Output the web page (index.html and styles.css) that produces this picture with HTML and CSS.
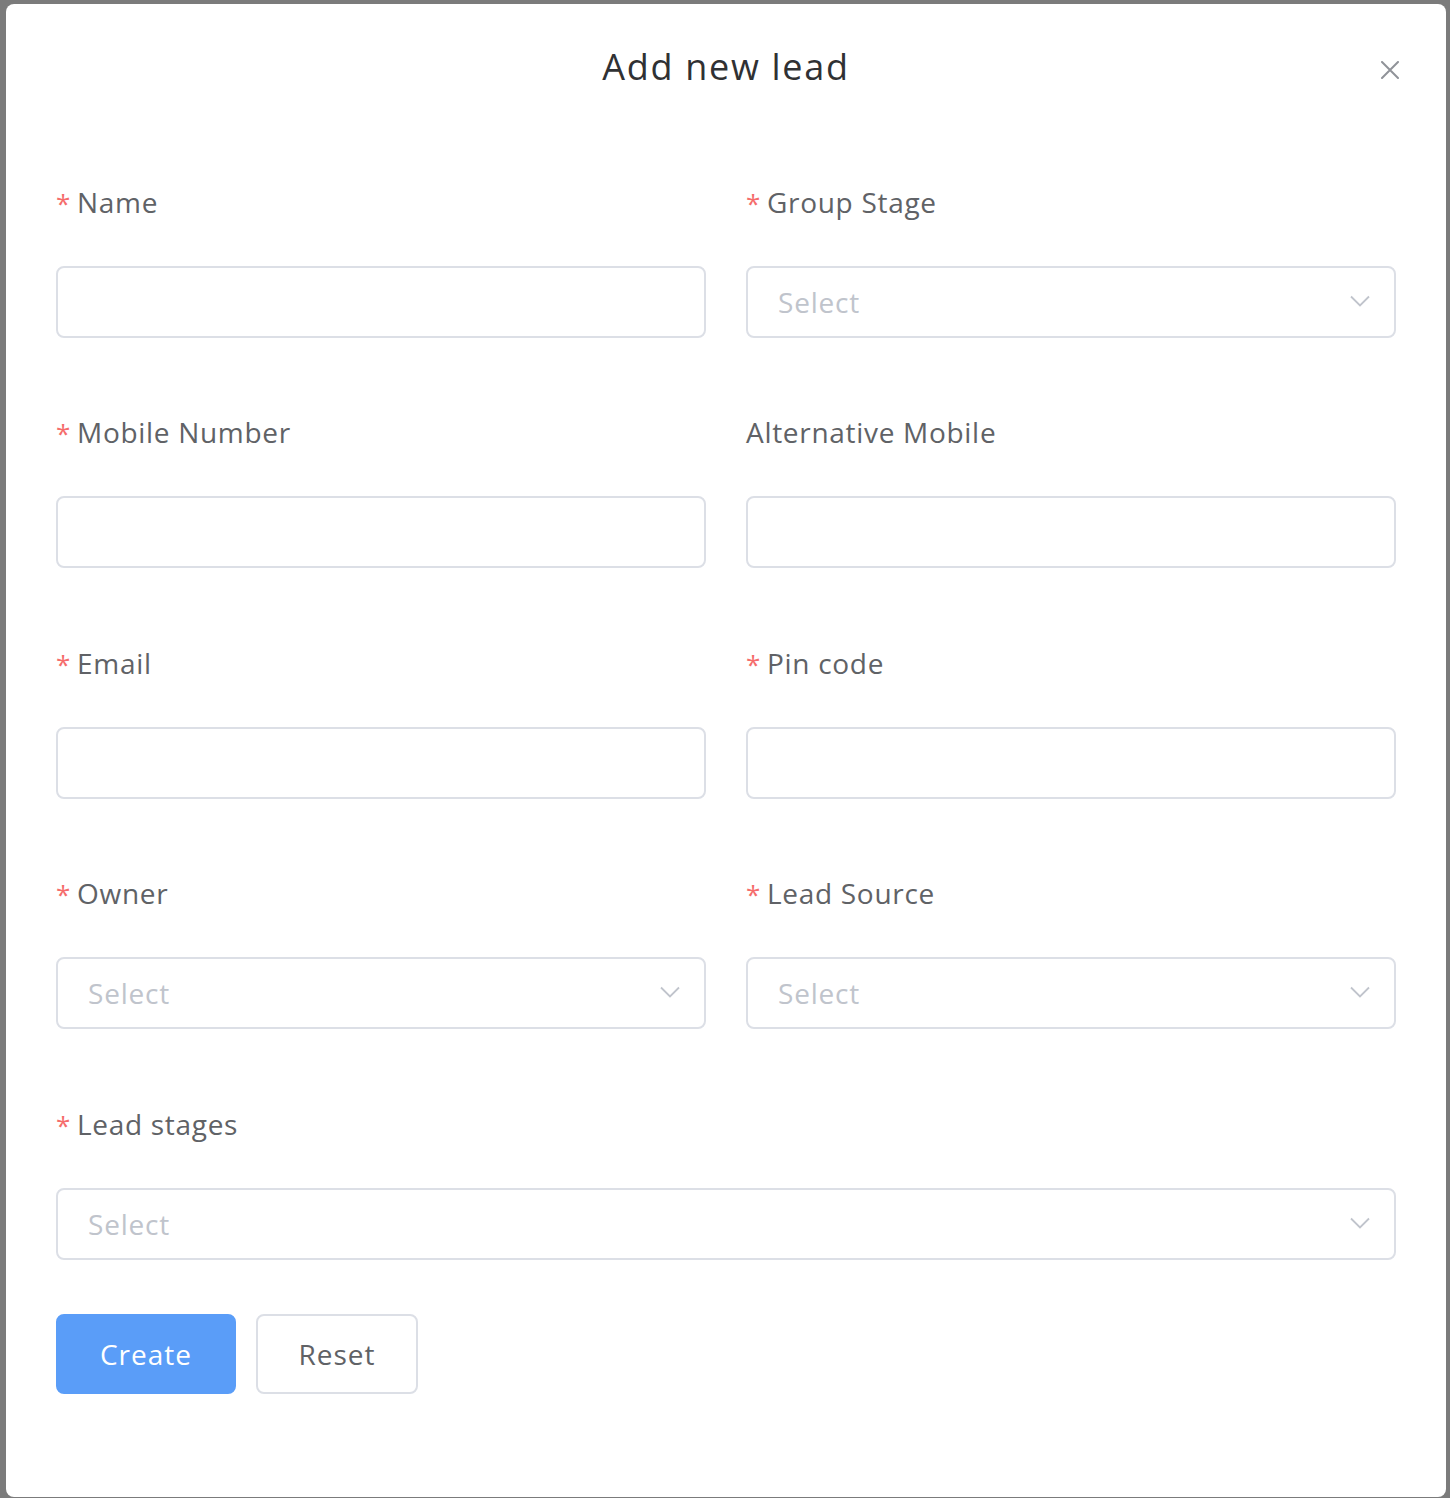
FILE: index.html
```html
<!DOCTYPE html>
<html lang="en">
<head>
<meta charset="utf-8">
<title>Add new lead</title>
<link rel="stylesheet" href="styles.css">
</head>
<body>
<div class="overlay">
  <div class="dialog" role="dialog" aria-label="Add new lead">
    <header class="dialog-header">
      <h2 class="dialog-title">Add new lead</h2>
      <button class="dialog-close" type="button" aria-label="Close">
        <svg viewBox="0 0 18 18" width="18" height="18"><path d="M1 1 L17 17 M17 1 L1 17" stroke="#909399" stroke-width="2" stroke-linecap="round" fill="none"/></svg>
      </button>
    </header>
    <form class="form">
      <div class="grid">
        <div class="item">
          <label class="label required">Name</label>
          <div class="control"><input class="input" type="text"></div>
        </div>
        <div class="item">
          <label class="label required">Group Stage</label>
          <div class="control select"><span class="placeholder">Select</span><svg class="chev" viewBox="0 0 20 12" width="20" height="12"><path d="M1 1.5 L10 10.5 L19 1.5" stroke="#c0c4cc" stroke-width="1.8" fill="none"/></svg></div>
        </div>
        <div class="item">
          <label class="label required">Mobile Number</label>
          <div class="control"><input class="input" type="text"></div>
        </div>
        <div class="item">
          <label class="label">Alternative Mobile</label>
          <div class="control"><input class="input" type="text"></div>
        </div>
        <div class="item">
          <label class="label required">Email</label>
          <div class="control"><input class="input" type="text"></div>
        </div>
        <div class="item">
          <label class="label required">Pin code</label>
          <div class="control"><input class="input" type="text"></div>
        </div>
        <div class="item">
          <label class="label required">Owner</label>
          <div class="control select"><span class="placeholder">Select</span><svg class="chev" viewBox="0 0 20 12" width="20" height="12"><path d="M1 1.5 L10 10.5 L19 1.5" stroke="#c0c4cc" stroke-width="1.8" fill="none"/></svg></div>
        </div>
        <div class="item">
          <label class="label required">Lead Source</label>
          <div class="control select"><span class="placeholder">Select</span><svg class="chev" viewBox="0 0 20 12" width="20" height="12"><path d="M1 1.5 L10 10.5 L19 1.5" stroke="#c0c4cc" stroke-width="1.8" fill="none"/></svg></div>
        </div>
      </div>
      <div class="item">
        <label class="label required">Lead stages</label>
        <div class="control select"><span class="placeholder">Select</span><svg class="chev" viewBox="0 0 20 12" width="20" height="12"><path d="M1 1.5 L10 10.5 L19 1.5" stroke="#c0c4cc" stroke-width="1.8" fill="none"/></svg></div>
      </div>
      <div class="actions">
        <button class="btn btn-primary" type="button">Create</button>
        <button class="btn btn-default" type="button">Reset</button>
      </div>
    </form>
  </div>
</div>
</body>
</html>
```
FILE: styles.css
```css
* { box-sizing: border-box; }
html, body { margin: 0; padding: 0; }
body {
  background: #7b7b7b;
  font-family: "Open Sans", "Noto Sans", sans-serif;
  overflow: hidden;
}
.overlay {
  height: 1498px;
  padding: 4px 4px 0 6px;
}
.dialog {
  position: relative;
  background: #ffffff;
  border-radius: 8px;
  height: 1493px;
  padding: 39px 50px 0 50px;
}
.dialog-header {
  height: 118.5px;
}
.dialog-title {
  margin: 0;
  text-align: center;
  font-size: 36px;
  line-height: 48px;
  font-weight: 400;
  color: #303133;
  letter-spacing: 1.7px;
}
.dialog-close {
  position: absolute;
  top: 57px;
  right: 47px;
  width: 18px;
  height: 18px;
  padding: 0;
  border: 0;
  background: none;
  display: block;
}
.dialog-close svg { display: block; }
.grid {
  display: grid;
  grid-template-columns: 650px 650px;
  column-gap: 40px;
}
.item {
  margin-bottom: 54.5px;
}
.label {
  display: block;
  height: 104px;
  line-height: 80px;
  padding-bottom: 24px;
  font-size: 28px;
  color: #606266;
  letter-spacing: 0.7px;
}
.label.required::before {
  content: "*";
  color: #f56c6c;
  display: inline-block;
  width: 21px;
  margin-left: 0;
  font-size: 26px;
}
.control {
  height: 72px;
  border: 2px solid #dcdfe6;
  border-radius: 8px;
  background: #fff;
}
.input {
  display: block;
  width: 100%;
  height: 100%;
  border: 0;
  outline: none;
  background: transparent;
  padding: 0 30px;
  font: inherit;
  font-size: 28px;
}
.select {
  display: flex;
  align-items: center;
  justify-content: space-between;
  padding: 0 24px 0 30px;
}
.placeholder {
  font-size: 28px;
  color: #c0c4cc;
  letter-spacing: 0.8px;
}
.chev { display: block; margin-top: -2px; }
.actions {
  display: flex;
  gap: 20px;
}
.btn {
  height: 80px;
  border-radius: 8px;
  font-family: inherit;
  font-size: 28px;
  font-weight: 500;
  letter-spacing: 1px;
  padding: 0;
  cursor: pointer;
}
.btn-primary {
  width: 180px;
  background: #5a9df8;
  border: 2px solid #5a9df8;
  color: #ffffff;
}
.btn-default {
  width: 162px;
  background: #ffffff;
  border: 2px solid #dcdfe6;
  color: #606266;
}
```
